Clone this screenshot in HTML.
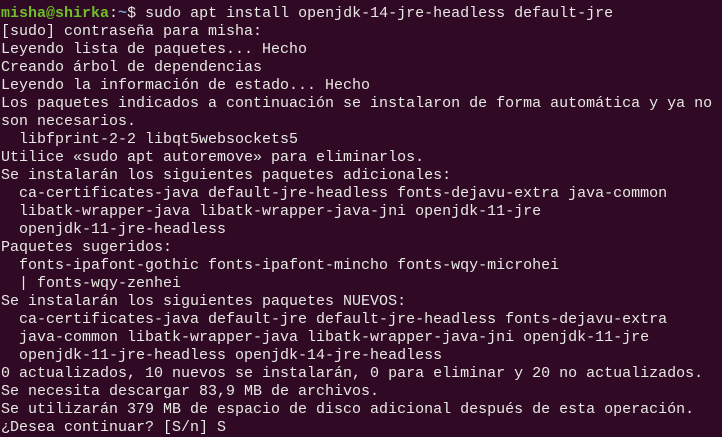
<!DOCTYPE html>
<html><head><meta charset="utf-8"><style>
html,body{margin:0;padding:0;background:#300a24;width:722px;height:435px;overflow:hidden}
pre{margin:0;position:absolute;left:1px;top:5px;font-family:"Liberation Mono",monospace;font-size:15px;line-height:18px;color:#e8e8e4;white-space:pre}
.g{color:#6fbf2a;font-weight:bold}.b{color:#729fcf;font-weight:bold}
</style></head><body><pre><span class="g">misha@shirka</span>:<span class="b">~</span>$ sudo apt install openjdk-14-jre-headless default-jre
[sudo] contraseña para misha:
Leyendo lista de paquetes... Hecho
Creando árbol de dependencias
Leyendo la información de estado... Hecho
Los paquetes indicados a continuación se instalaron de forma automática y ya no
son necesarios.
  libfprint-2-2 libqt5websockets5
Utilice «sudo apt autoremove» para eliminarlos.
Se instalarán los siguientes paquetes adicionales:
  ca-certificates-java default-jre-headless fonts-dejavu-extra java-common
  libatk-wrapper-java libatk-wrapper-java-jni openjdk-11-jre
  openjdk-11-jre-headless
Paquetes sugeridos:
  fonts-ipafont-gothic fonts-ipafont-mincho fonts-wqy-microhei
  | fonts-wqy-zenhei
Se instalarán los siguientes paquetes NUEVOS:
  ca-certificates-java default-jre default-jre-headless fonts-dejavu-extra
  java-common libatk-wrapper-java libatk-wrapper-java-jni openjdk-11-jre
  openjdk-11-jre-headless openjdk-14-jre-headless
0 actualizados, 10 nuevos se instalarán, 0 para eliminar y 20 no actualizados.
Se necesita descargar 83,9 MB de archivos.
Se utilizarán 379 MB de espacio de disco adicional después de esta operación.
¿Desea continuar? [S/n] S</pre></body></html>
